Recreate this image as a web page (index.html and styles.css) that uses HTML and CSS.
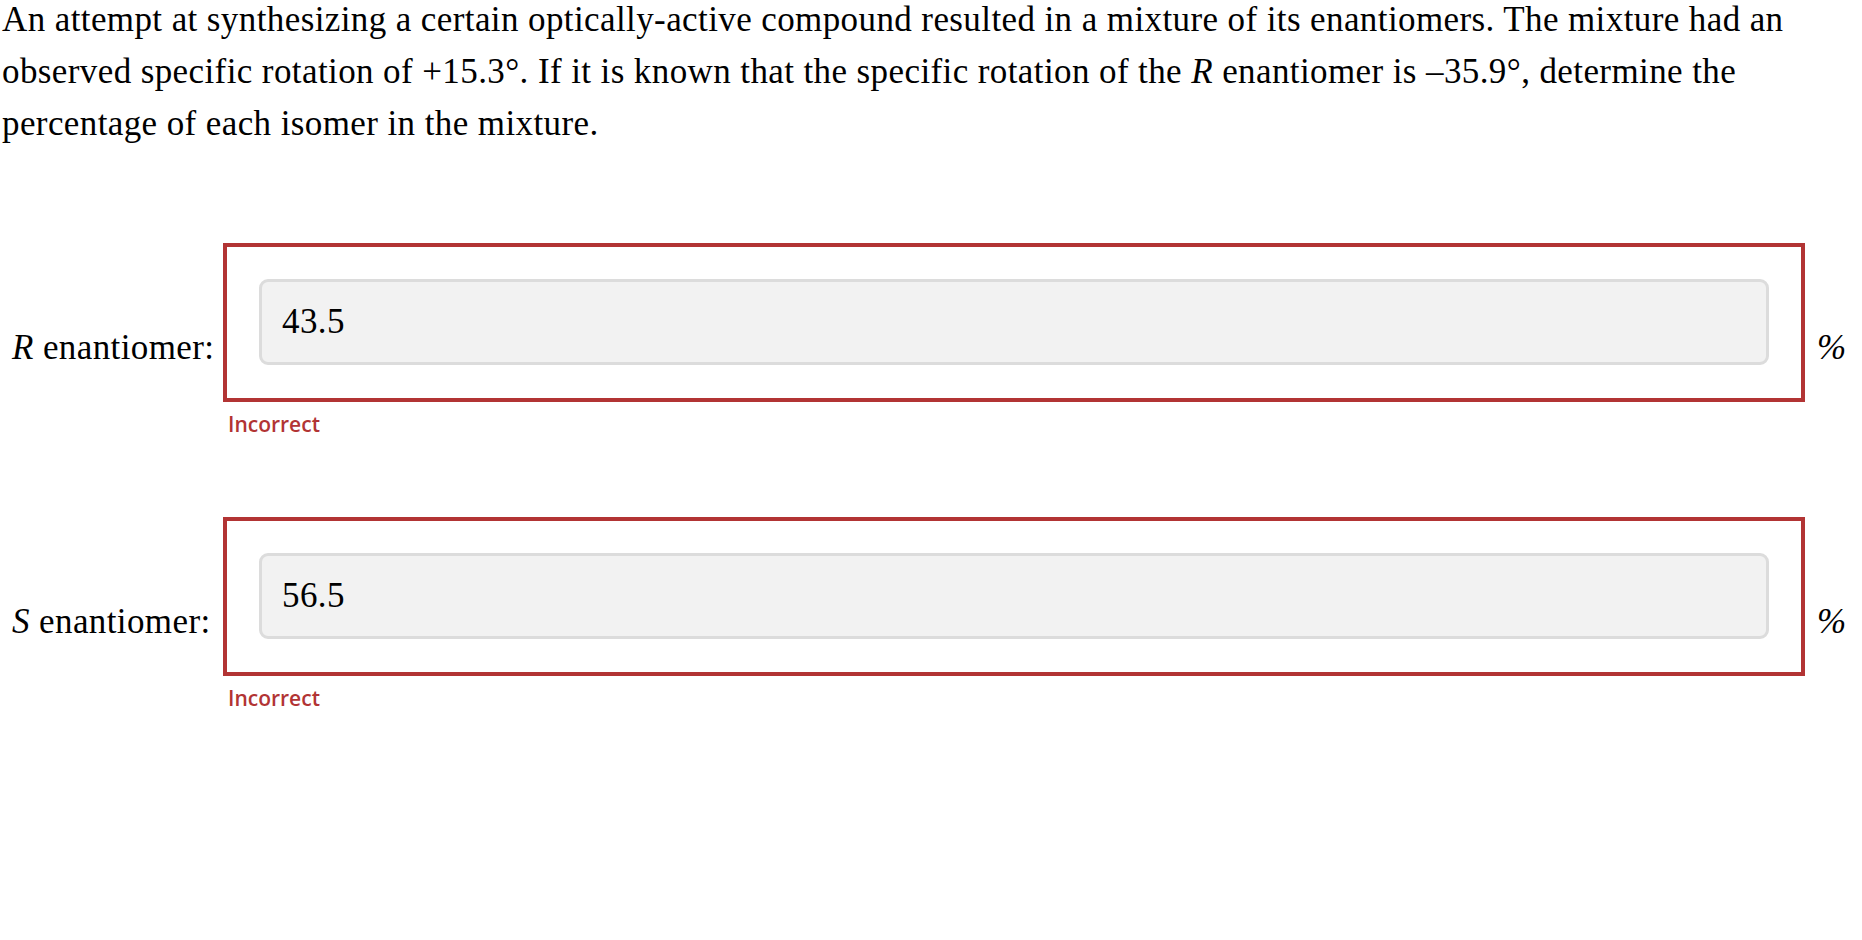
FILE: index.html
```html
<!DOCTYPE html>
<html lang="en">
<head>
<meta charset="utf-8">
<title>Enantiomer mixture</title>
<link rel="stylesheet" href="styles.css">
</head>
<body>
<p class="question">An attempt at synthesizing a certain optically-active compound resulted in a mixture of its enantiomers. The mixture had an observed specific rotation of +15.3°. If it is known that the specific rotation of the <i>R</i> enantiomer is –35.9°, determine the percentage of each isomer in the mixture.</p>

<div class="answers">
  <div class="row">
    <label class="label" for="r-val"><i>R</i> enantiomer:</label>
    <div class="box">
      <input id="r-val" class="field" type="text" value="43.5" readonly>
    </div>
    <span class="unit">%</span>
    <span class="feedback">Incorrect</span>
  </div>

  <div class="row">
    <label class="label" for="s-val"><i>S</i> enantiomer:</label>
    <div class="box">
      <input id="s-val" class="field" type="text" value="56.5" readonly>
    </div>
    <span class="unit">%</span>
    <span class="feedback">Incorrect</span>
  </div>
</div>
</body>
</html>
```

FILE: styles.css
```css
html, body {
  margin: 0;
  padding: 0;
  background: #ffffff;
}

body {
  font-family: "Liberation Serif", "Times New Roman", serif;
  font-size: 35px;
  letter-spacing: 0.4px;
  color: #000000;
}

.question {
  margin: -6px 0 0 0;
  line-height: 52px;
  padding-left: 2px;
}

.answers {
  display: flex;
  flex-direction: column;
  gap: 78px;
  margin-top: 93px;
}

.row {
  display: grid;
  grid-template-columns: 223px 1582px auto;
  grid-template-rows: auto auto;
  align-items: end;
}

.label {
  grid-column: 1;
  grid-row: 1;
  padding-left: 12px;
  line-height: 51px;
  margin-bottom: 29px;
  white-space: nowrap;
}

.box {
  grid-column: 2;
  grid-row: 1;
  border: 4px solid #b23434;
  padding: 32px 32px 33px 32px;
}

.field {
  display: block;
  width: 100%;
  box-sizing: border-box;
  height: 86px;
  margin: 0;
  border: 3px solid #dcdcdc;
  border-radius: 9px;
  background: #f2f2f2;
  padding: 0 20px;
  font-family: "Liberation Serif", "Times New Roman", serif;
  font-size: 35px;
  letter-spacing: 0.4px;
  color: #000000;
  outline: none;
}

.unit {
  grid-column: 3;
  grid-row: 1;
  padding-left: 12px;
  font-style: italic;
  line-height: 51px;
  margin-bottom: 29px;
}

.feedback {
  grid-column: 2;
  grid-row: 2;
  padding-left: 5px;
  padding-top: 7px;
  font-family: "Open Sans", "Liberation Sans", sans-serif;
  font-weight: 600;
  font-size: 21px;
  letter-spacing: 0;
  line-height: 30px;
  color: #b23434;
}
```
